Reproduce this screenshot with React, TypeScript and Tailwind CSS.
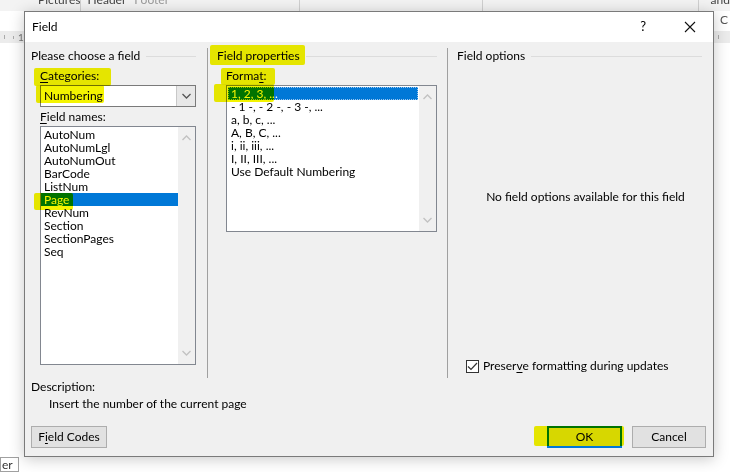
import React from "react";

const fieldNames = [
  "AutoNum",
  "AutoNumLgl",
  "AutoNumOut",
  "BarCode",
  "ListNum",
  "Page",
  "RevNum",
  "Section",
  "SectionPages",
  "Seq",
];

const formats = [
  "1, 2, 3, ...",
  "- 1 -, - 2 -, - 3 -, ...",
  "a, b, c, ...",
  "A, B, C, ...",
  "i, ii, iii, ...",
  "I, II, III, ...",
  "Use Default Numbering",
];

function Marker({ className }: { className: string }) {
  return (
    <span
      className={`pointer-events-none absolute rounded-[2px] bg-[#f4f400] mix-blend-multiply ${className}`}
    />
  );
}

function Chevron({ up, className }: { up?: boolean; className?: string }) {
  return (
    <svg width="9" height="6" viewBox="0 0 9 6" className={className}>
      <path
        d={up ? "M0.5 5 L4.5 1 L8.5 5" : "M0.5 1 L4.5 5 L8.5 1"}
        fill="none"
        stroke="currentColor"
        strokeWidth="1.3"
      />
    </svg>
  );
}

function GroupHeader({ title }: { title: string }) {
  return (
    <div className="flex h-[16px] items-center">
      <span className="leading-[16px]">{title}</span>
      <span className="ml-[6px] h-px flex-1 bg-[#dcdcdc]" />
    </div>
  );
}

function ScrollTrack() {
  return (
    <div className="flex w-[17px] flex-col items-center justify-between bg-[#f0f0f0] py-[8px] text-[#c2c2c2]">
      <Chevron up />
      <Chevron />
    </div>
  );
}

export default function App() {
  return (
    <div
      className="relative h-[472px] w-[730px] overflow-hidden bg-white text-[12px] text-black"
      style={{ fontFamily: 'Lato, "Noto Sans", sans-serif' }}
    >
      {/* Word window behind the dialog */}
      <div className="flex h-[11px] items-start overflow-hidden bg-[#f3f3f3] text-[12px] leading-[14px] text-[#444]">
        <span className="ml-[38px] mt-[-7px] w-[49px]">Pictures</span>
        <span className="h-[11px] w-px bg-[#d0d0d0]" />
        <span className="ml-[7px] mt-[-7px]">Header</span>
        <span className="ml-[8px] mt-[-7px] text-[#9a9a9a]">Footer</span>
        <span className="ml-[130px] h-[11px] w-px bg-[#d0d0d0]" />
        <span className="ml-[183px] h-[11px] w-px bg-[#d0d0d0]" />
        <span className="ml-[216px] h-[11px] w-px bg-[#d0d0d0]" />
        <span className="ml-[12px] mt-[-7px]">and</span>
      </div>
      <div className="h-[20px] bg-white">
        <span className="ml-[720px] text-[12px] leading-[16px] text-[#555]">C</span>
      </div>
      <div className="flex h-[12px] items-center bg-[#ececec] text-[10px] text-[#777]">
        <span className="ml-[4px] h-[4px] w-px bg-[#aaa]" />
        <span className="ml-[8px] h-[3px] w-px bg-[#aaa]" />
        <span className="ml-[4px]">1</span>
        <span className="ml-[694px] h-[4px] w-px bg-[#aaa]" />
      </div>
      <div className="absolute bottom-0 left-0 h-[15px] w-[19px] border border-[#a0a0a0] bg-white pl-[1px] text-[12px] leading-[13px] text-[#333]">
        er
      </div>

      {/* Field dialog */}
      <div className="absolute left-[24px] top-[11px] flex h-[446px] w-[690px] flex-col border border-[#7a7a7a] bg-[#f0f0f0] shadow-[0_2px_14px_rgba(0,0,0,0.22)]">
        <div className="flex h-[30px] items-center bg-white">
          <span className="ml-[7px] flex-1">Field</span>
          <span className="mr-[38px] text-[13px]">?</span>
          <svg width="12" height="12" viewBox="0 0 12 12" className="mr-[17px]">
            <path d="M1 1 L11 11 M11 1 L1 11" stroke="#111" strokeWidth="1.1" />
          </svg>
        </div>

        <div className="relative flex flex-1 flex-col px-[6px] pt-[6px]">
          <div className="flex h-[330px]">
            {/* Column 1 */}
            <div className="w-[176px] pr-[11px]">
              <GroupHeader title="Please choose a field" />
              <div className="ml-[9px] mt-[5px] leading-[14px]">
                <span className="underline underline-offset-2">C</span>ategories:
              </div>
              <div className="ml-[9px] mt-[2px] flex h-[22px] border border-[#7a7a7a] bg-white">
                <span className="flex-1 pl-[3px] leading-[20px]">Numbering</span>
                <span className="flex w-[19px] items-center justify-center border-l border-[#c8c8c8] bg-[#e8e8e8] text-[#555]">
                  <Chevron />
                </span>
              </div>
              <div className="ml-[9px] mt-[3px] leading-[14px]">
                <span className="underline underline-offset-2">F</span>ield names:
              </div>
              <div className="ml-[9px] mt-[2px] flex h-[239px] border border-[#828790] bg-white">
                <div className="flex-1 pt-[1px]">
                  {fieldNames.map((n) => (
                    <div
                      key={n}
                      className={`h-[13px] pl-[3px] leading-[13px] ${
                        n === "Page" ? "bg-[#0078d7] text-white" : ""
                      }`}
                    >
                      {n}
                    </div>
                  ))}
                </div>
                <ScrollTrack />
              </div>
            </div>

            {/* Column 2 */}
            <div className="w-[240px] border-l border-[#a0a0a0] pl-[9px] pr-[10px]">
              <GroupHeader title="Field properties" />
              <div className="ml-[9px] mt-[5px] leading-[14px]">
                Forma<span className="underline underline-offset-2">t</span>:
              </div>
              <div className="ml-[9px] mt-[2px] flex h-[147px] border border-[#828790] bg-white">
                <div className="flex-1 px-[1px] pt-[1px]">
                  {formats.map((f, i) => (
                    <div
                      key={f}
                      className={`h-[13px] pl-[2px] leading-[12px] ${
                        i === 0
                          ? "border border-dotted border-[#9cc6ee] bg-[#0078d7] text-white"
                          : "border border-transparent"
                      }`}
                    >
                      {f}
                    </div>
                  ))}
                </div>
                <ScrollTrack />
              </div>
            </div>

            {/* Column 3 */}
            <div className="flex-1 border-l border-[#a0a0a0] pl-[9px] pr-[5px]">
              <GroupHeader title="Field options" />
              <div className="mt-[125px] pl-[12px] text-center leading-[16px]">
                No field options available for this field
              </div>
              <div className="ml-[9px] mt-[154px] flex items-center gap-[4px]">
                <span className="flex h-[13px] w-[13px] items-center justify-center border border-[#333] bg-white">
                  <svg width="11" height="9" viewBox="0 0 11 9">
                    <path d="M1 4.5 L4 7.5 L10 1" fill="none" stroke="#333" strokeWidth="1.2" />
                  </svg>
                </span>
                <span className="leading-[14px]">
                  Preser<span className="underline underline-offset-2">v</span>e formatting during updates
                </span>
              </div>
            </div>
          </div>

          <div className="mt-[2px] leading-[14px]">Description:</div>
          <div className="ml-[18px] mt-[3px] leading-[14px]">Insert the number of the current page</div>

          <div className="mt-[15px] flex justify-between pr-[1px]">
            <button className="h-[22px] w-[76px] border border-[#adadad] bg-[#e1e1e1]">
              F<span className="underline underline-offset-2">i</span>eld Codes
            </button>
            <div className="flex gap-[10px]">
              <button className="h-[22px] w-[75px] border-2 border-[#0078d7] bg-[#e1e1e1]">OK</button>
              <button className="h-[22px] w-[74px] border border-[#adadad] bg-[#e1e1e1]">Cancel</button>
            </div>
          </div>

          {/* highlighter marks */}
          <Marker className="left-[185px] top-[3px] h-[20px] w-[95px]" />
          <Marker className="left-[9px] top-[26px] h-[18px] w-[77px]" />
          <Marker className="left-[11px] top-[43px] h-[18px] w-[68px]" />
          <Marker className="left-[9px] top-[151px] h-[17px] w-[39px]" />
          <Marker className="left-[196px] top-[26px] h-[17px] w-[54px]" />
          <Marker className="left-[189px] top-[42px] h-[18px] w-[60px]" />
          <Marker className="left-[509px] top-[384px] h-[20px] w-[90px]" />
        </div>
      </div>
    </div>
  );
}
